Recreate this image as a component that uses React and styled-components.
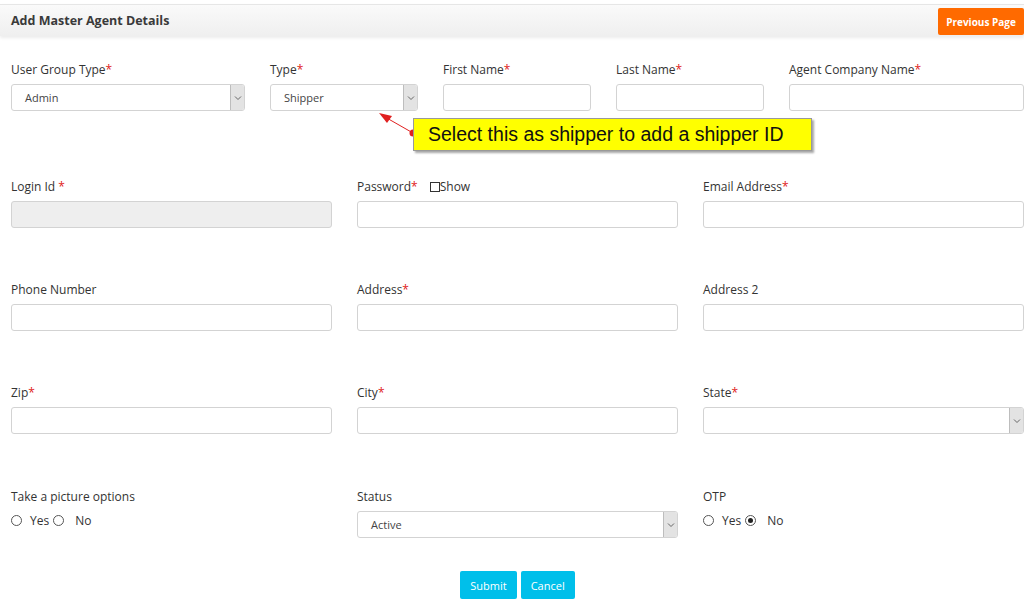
import React from 'react';
import styled, { createGlobalStyle } from 'styled-components';

const Global = createGlobalStyle`
  body { margin: 0; background: #fff; font-family: "Open Sans", "Liberation Sans", sans-serif; color: #333; }
  * { box-sizing: border-box; }
`;

const Page = styled.div`
  position: relative;
  width: 1024px;
  height: 601px;
  overflow: hidden;
  padding-top: 4px;
`;

const Header = styled.div`
  height: 32px;
  display: flex;
  align-items: center;
  justify-content: space-between;
  background: linear-gradient(#fafafa, #efefef);
  border-top: 1px solid #e6e6e6;
  box-shadow: 0 2px 3px rgba(0,0,0,0.08);
  padding-left: 11px;
`;

const Title = styled.h1`
  margin: 0;
  font-size: 12.5px;
  font-weight: 700;
  color: #3a3a3a;
`;

const OrangeButton = styled.button`
  background: #ff6a00;
  color: #fff;
  border: none;
  border-radius: 2px;
  font-family: inherit;
  font-size: 10px;
  font-weight: 700;
  white-space: nowrap;
  height: 27px;
  width: 86px;
  padding: 0;
  margin-top: 2px;
`;

const Grid = styled.div`
  display: grid;
  grid-template-columns: ${p => p.$cols};
  column-gap: 25px;
  padding-left: 11px;
  margin-top: ${p => p.$top}px;
`;

const Field = styled.div`
  display: flex;
  flex-direction: column;
`;

const Label = styled.label`
  font-size: 12px;
  color: #333;
  height: 14px;
  line-height: 14px;
  margin-bottom: 7px;
  display: flex;
  align-items: center;
  white-space: pre;
`;

const Star = styled.span`
  color: #e02020;
`;

const Input = styled.div`
  height: 27px;
  border: 1px solid #d3d3d3;
  border-radius: 3px;
  background: ${p => (p.$disabled ? '#eeeeee' : '#fff')};
`;

const SelectBox = styled.div`
  height: 27px;
  border: 1px solid #d3d3d3;
  border-radius: 3px;
  background: #fff;
  display: flex;
  align-items: center;
  font-size: 11px;
  color: #444;
  padding-left: 13px;
  justify-content: space-between;
  overflow: hidden;
`;

const Arrow = styled.span`
  width: 14px;
  height: 100%;
  background: #e3e3e3;
  border-left: 1px solid #bdbdbd;
  display: flex;
  align-items: center;
  justify-content: center;
`;

const Check = styled.span`
  display: inline-block;
  width: 10px;
  height: 10px;
  border: 1px solid #333;
  margin-left: 12px;
`;

const Radios = styled.div`
  display: flex;
  align-items: center;
  font-size: 12px;
  height: 14px;
  margin-top: 2px;
  gap: 4px;
`;

const Radio = styled.span`
  width: 11px;
  height: 11px;
  border-radius: 50%;
  border: 1px solid #555;
  display: inline-flex;
  align-items: center;
  justify-content: center;
  margin-right: 4px;
  &::after {
    content: '';
    width: 5px;
    height: 5px;
    border-radius: 50%;
    background: ${p => (p.$on ? '#222' : 'transparent')};
  }
`;

const Buttons = styled.div`
  display: flex;
  justify-content: center;
  gap: 4px;
  margin-top: 33px;
  padding-left: 11px;
`;

const BlueButton = styled.button`
  background: #00bfea;
  color: #fff;
  border: none;
  border-radius: 2px;
  font-family: inherit;
  font-size: 11px;
  height: 28px;
  padding: 0 10px;
`;

const Callout = styled.div`
  position: absolute;
  left: 413px;
  top: 118px;
  width: 399px;
  height: 33px;
  background: #ffff00;
  border: 1px solid #999;
  box-shadow: 2px 2px 2px rgba(0,0,0,0.35);
  font-family: "Liberation Sans", Arial, sans-serif;
  font-size: 19.5px;
  color: #111;
  display: flex;
  align-items: center;
  padding-left: 14px;
`;

const ArrowSvg = styled.svg`
  position: absolute;
  left: 375px;
  top: 108px;
`;

const Sel = ({ v }) => (
  <SelectBox>
    <span>{v}</span>
    <Arrow>
      <svg width="8" height="6" viewBox="0 0 8 6">
        <path d="M1 1.5 L4 4.5 L7 1.5" fill="none" stroke="#666" strokeWidth="1" />
      </svg>
    </Arrow>
  </SelectBox>
);

const F = ({ label, req, children, extra }) => (
  <Field>
    <Label>
      {label}
      {req && <Star>*</Star>}
      {extra}
    </Label>
    {children}
  </Field>
);

const three = '321px 321px 321px';

export default function App() {
  return (
    <Page>
      <Global />
      <Header>
        <Title>Add Master Agent Details</Title>
        <OrangeButton>Previous Page</OrangeButton>
      </Header>

      <Grid $cols="234px 148px 148px 148px 1fr" $top={27}>
        <F label="User Group Type" req><Sel v="Admin" /></F>
        <F label="Type" req><Sel v="Shipper" /></F>
        <F label="First Name" req><Input /></F>
        <F label="Last Name" req><Input /></F>
        <F label="Agent Company Name" req><Input /></F>
      </Grid>

      <Grid $cols={three} $top={69}>
        <F label="Login Id " req><Input $disabled /></F>
        <F label="Password" req extra={<><Check />Show</>}><Input /></F>
        <F label="Email Address" req><Input /></F>
      </Grid>

      <Grid $cols={three} $top={55}>
        <F label="Phone Number"><Input /></F>
        <F label="Address" req><Input /></F>
        <F label="Address 2"><Input /></F>
      </Grid>

      <Grid $cols={three} $top={55}>
        <F label="Zip" req><Input /></F>
        <F label="City" req><Input /></F>
        <F label="State" req><Sel v="" /></F>
      </Grid>

      <Grid $cols={three} $top={56}>
        <F label="Take a picture options">
          <Radios><Radio />Yes<Radio />&nbsp;No</Radios>
        </F>
        <F label="Status"><Sel v="Active" /></F>
        <F label="OTP">
          <Radios><Radio />Yes<Radio $on />&nbsp;No</Radios>
        </F>
      </Grid>

      <Buttons>
        <BlueButton>Submit</BlueButton>
        <BlueButton>Cancel</BlueButton>
      </Buttons>

      <ArrowSvg width="45" height="30">
        <line x1="38" y1="25" x2="10" y2="9" stroke="#e02020" strokeWidth="1" />
        <polygon points="4,5 17,8 12,15" fill="#e02020" />
        <circle cx="38" cy="25" r="3.5" fill="#e02020" />
      </ArrowSvg>
      <Callout>Select this as shipper to add a shipper ID</Callout>
    </Page>
  );
}
